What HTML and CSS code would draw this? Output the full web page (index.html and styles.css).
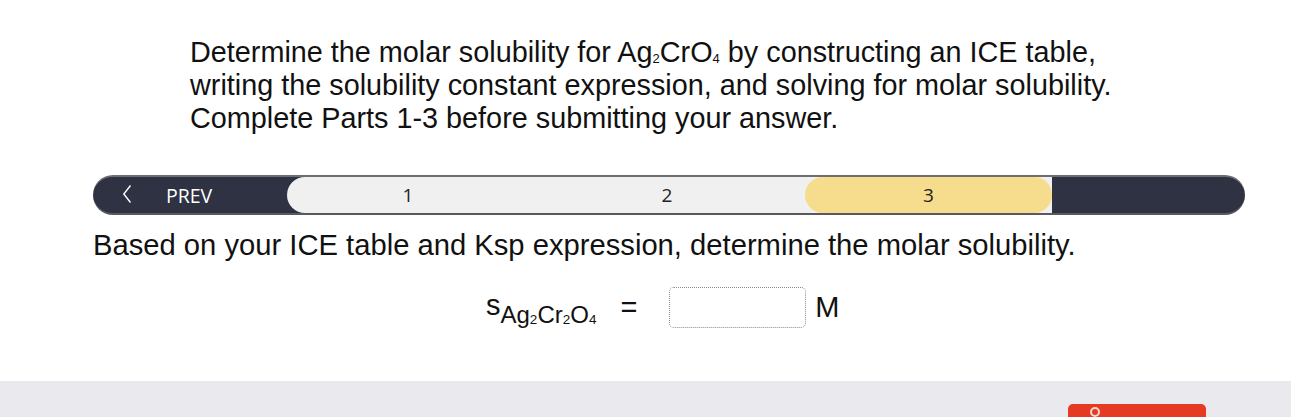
FILE: index.html
```html
<!DOCTYPE html>
<html>
<head>
<meta charset="utf-8">
<link rel="stylesheet" href="styles.css">
</head>
<body>
<div class="page">
  <p class="intro">Determine the molar solubility for Ag<span class="sub">2</span>CrO<span class="sub">4</span> by constructing an ICE table,<br>writing the solubility constant expression, and solving for molar solubility.<br>Complete Parts 1-3 before submitting your answer.</p>

  <div class="stepper">
    <div class="prev">
      <svg class="chev" width="10" height="20" viewBox="0 0 10 20"><path d="M8.5 1.5 L1.8 10 L8.5 18.5" fill="none" stroke="#ffffff" stroke-width="1.4"/></svg>
      <span class="prev-label">PREV</span>
    </div>
    <div class="track">
      <div class="step s1">1</div>
      <div class="step s2">2</div>
      <div class="step s3 active">3</div>
    </div>
  </div>

  <p class="question">Based on your ICE table and Ksp expression, determine the molar solubility.</p>

  <div class="equation">
    <span class="var">s<span class="varsub">Ag<span class="sub2">2</span>Cr<span class="sub2">2</span>O<span class="sub2">4</span></span></span>
    <span class="eq">=</span>
    <input class="answer" type="text">
    <span class="unit">M</span>
  </div>
</div>
<div class="footer">
  <div class="submit"><span class="submit-icon"></span></div>
</div>
</body>
</html>
```

FILE: styles.css
```css
html, body {
  margin: 0;
  padding: 0;
  background: #ffffff;
  height: 417px;
  overflow: hidden;
}
body {
  font-family: "Liberation Sans", Arial, sans-serif;
  color: #1a1a1a;
}
.page {
  height: 381px;
  padding: 36px 0 0 0;
  box-sizing: border-box;
}
.intro {
  margin: 0 0 0 190px;
  font-size: 28.8px;
  line-height: 33px;
  color: #111;
}
.sub {
  font-size: 13px;
  line-height: 0;
  vertical-align: -1px;
}
.stepper {
  margin: 40px 0 0 93px;
  width: 1152px;
  height: 40px;
  box-sizing: border-box;
  background: #2e3243;
  border-radius: 20px;
  border-top: 2px solid #6e6e72;
  border-bottom: 2px solid #5a5a5e;
  display: flex;
  align-items: stretch;
}
.prev {
  width: 194px;
  display: flex;
  align-items: center;
  color: #ffffff;
  font-family: "Open Sans", "Noto Sans", sans-serif;
}
.chev {
  margin-left: 29px;
  margin-top: -2px;
  display: block;
}
.prev-label {
  font-size: 19.5px;
  margin-left: 34px;
  margin-top: 0;
}
.track {
  width: 765px;
  display: flex;
  background: #f0f0f0;
  border-radius: 18px 0 0 18px;
}
.step {
  display: flex;
  align-items: center;
  justify-content: center;
  font-family: "Open Sans", "Noto Sans", sans-serif;
  font-size: 19px;
  color: #222;
}
.s1 { flex: 0 0 242px; }
.s2 { flex: 0 0 276px; }
.s3 { flex: 0 0 247px; }
.step.active {
  background: #f6dc8d;
  border-radius: 18px;
}
.question {
  margin: 15px 0 0 93px;
  font-size: 29.2px;
  line-height: 30px;
  color: #111;
}
.equation {
  margin: 27px 0 0 486px;
  display: flex;
  align-items: center;
  height: 41px;
}
.var {
  font-size: 29px;
  color: #111;
  position: relative;
  top: 1px;
}
.varsub {
  font-size: 24px;
  vertical-align: -8px;
}
.sub2 {
  font-size: 13.5px;
  vertical-align: -1px;
}
.eq {
  font-size: 29px;
  margin-left: 24px;
  color: #111;
}
.answer {
  margin: 0 0 0 32px;
  width: 137px;
  height: 41px;
  box-sizing: border-box;
  border: 1px dotted #8a8a8a;
  border-radius: 5px;
  background: #fff;
  padding: 0;
}
.unit {
  font-size: 29px;
  margin-left: 9px;
  color: #111;
}
.footer {
  height: 36px;
  background: #e9e9ee;
  position: relative;
}
.submit {
  position: absolute;
  left: 1068px;
  top: 23px;
  width: 138px;
  height: 20px;
  background: #e43b22;
  border-radius: 5px 5px 0 0;
}
.submit-icon {
  position: absolute;
  left: 22px;
  top: 3px;
  width: 10px;
  height: 10px;
  border: 2px solid rgba(255,255,255,0.8);
  border-radius: 50%;
  box-sizing: border-box;
}
```
